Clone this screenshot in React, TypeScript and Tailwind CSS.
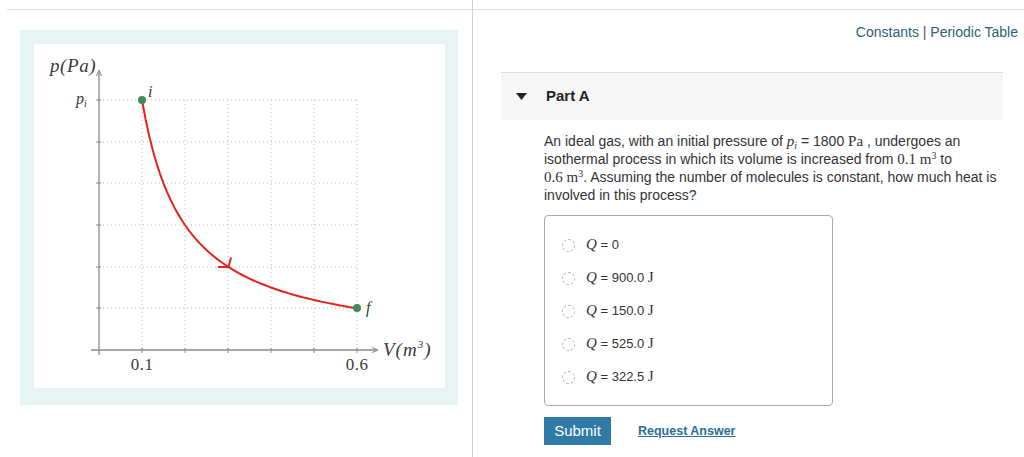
import React from 'react';

const serif = { fontFamily: '"Liberation Serif", "DejaVu Serif", serif' };

function Graph() {
  // isothermal curve p = pi * 0.1 / V, page coordinates
  const X = (v: number) => 142 + (v - 0.1) * 430;
  const Y = (r: number) => 350 - 250 * r;
  const pts: string[] = [];
  for (let i = 0; i <= 60; i++) {
    const v = 0.1 + (0.5 * i) / 60;
    pts.push(`${X(v).toFixed(2)},${Y(0.1 / v).toFixed(2)}`);
  }
  const cols = [142, 185, 228, 271, 314, 357];
  const rows = [100, 142, 183, 225, 267, 308];

  return (
    <svg width="411" height="344" viewBox="34 44 411 344" className="block">
      {/* grid */}
      {cols.map((x) => (
        <line key={'c' + x} x1={x} y1={100} x2={x} y2={350} stroke="#b8b8b8" strokeWidth="1" strokeDasharray="1 3" />
      ))}
      {rows.map((y) => (
        <line key={'r' + y} x1={99} y1={y} x2={357} y2={y} stroke="#b8b8b8" strokeWidth="1" strokeDasharray="1 3" />
      ))}
      {/* axes */}
      <line x1={99} y1={355} x2={99} y2={72} stroke="#8a8a8a" strokeWidth="1.3" />
      <path d="M96.5 76 L99 70 L101.5 76" fill="none" stroke="#8a8a8a" strokeWidth="1" />
      <line x1={91} y1={350} x2={376} y2={350} stroke="#8a8a8a" strokeWidth="1.3" />
      <path d="M372 347.5 L378 350 L372 352.5" fill="none" stroke="#8a8a8a" strokeWidth="1" />
      {rows.map((y) => (
        <line key={'ty' + y} x1={96} y1={y} x2={101} y2={y} stroke="#8a8a8a" strokeWidth="1" />
      ))}
      {cols.map((x) => (
        <line key={'tx' + x} x1={x} y1={348} x2={x} y2={353} stroke="#8a8a8a" strokeWidth="1" />
      ))}
      {/* curve */}
      <polyline points={pts.join(' ')} fill="none" stroke="#e3231b" strokeWidth="2" />
      <path d="M218 267 L228.5 267 L231 257.5" fill="none" stroke="#e3231b" strokeWidth="2" />
      <circle cx={142} cy={100} r={4} fill="#3e8c5d" />
      <circle cx={357} cy={308} r={4} fill="#3e8c5d" />
      {/* labels */}
      <g fill="#3a3a3a" style={serif}>
        <text x={50} y={72} fontSize="19" fontStyle="italic" letterSpacing="0.6">
          p(Pa)
        </text>
        <text x={76} y={104} fontSize="16" fontStyle="italic">
          p
          <tspan fontSize="10" dy="3">
            i
          </tspan>
        </text>
        <text x={148} y={97} fontSize="16" fontStyle="italic">
          i
        </text>
        <text x={366} y={313} fontSize="16" fontStyle="italic">
          f
        </text>
        <text x={142} y={370} fontSize="17" textAnchor="middle" letterSpacing="0.5">
          0.1
        </text>
        <text x={357} y={370} fontSize="17" textAnchor="middle" letterSpacing="0.5">
          0.6
        </text>
        <text x={383} y={356} fontSize="19" fontStyle="italic" letterSpacing="1">
          V(m
          <tspan fontSize="11" dy="-8">
            3
          </tspan>
          <tspan dy="8">)</tspan>
        </text>
      </g>
    </svg>
  );
}

function M({ children, italic }: { children: React.ReactNode; italic?: boolean }) {
  return (
    <span className={`text-[15px] leading-none ${italic ? 'italic' : ''}`} style={serif}>
      {children}
    </span>
  );
}

const options = ['0', '900.0', '150.0', '525.0', '322.5'];

export default function App() {
  return (
    <div
      className="flex h-[457px] w-[1024px] bg-white text-[#333]"
      style={{ fontFamily: '"Liberation Sans", Arial, sans-serif' }}
    >
      {/* Left column - figure */}
      <div className="w-[473px] shrink-0 border-r border-[#cfcfcf]">
        <div className="ml-[7px] mt-[9px] border-t border-[#dedede]" />
        <div className="ml-[20px] mt-[20px] w-[438px] bg-[#e6f4f4] pb-[17px] pl-[14px] pr-[13px] pt-[14px]">
          <div className="bg-white">
            <Graph />
          </div>
        </div>
      </div>

      {/* Right column - question */}
      <div className="flex-1">
        <div className="mt-[9px] border-t border-[#dedede]" />
        <div className="mt-[14px] pr-[6px] text-right text-[14px] leading-4 text-[#2c5f78]">
          Constants <span className="text-[#555]">|</span> Periodic Table
        </div>

        <div className="ml-[28px] mr-[21px] mt-[32px]">
          <div className="flex h-[48px] items-center border-t border-[#dcdcdc] bg-[#f6f6f6]">
            <svg width="11" height="7" viewBox="0 0 11 7" className="ml-[15px]">
              <path d="M0 0 L11 0 L5.5 7 Z" fill="#222" />
            </svg>
            <span className="ml-[19px] text-[15px] font-bold text-[#222]">Part A</span>
          </div>

          <div className="ml-[43px]">
            <p className="mt-[12px] text-[14px] leading-[18px] text-[#333]">
              An ideal gas, with an initial pressure of{' '}
              <M italic>
                p<sub className="text-[10px]">i</sub>
              </M>{' '}
              = 1800 <M>Pa</M> , undergoes an
              <br />
              isothermal process in which its volume is increased from <M>0.1 m</M>
              <sup className="text-[10px]" style={serif}>
                3
              </sup>{' '}
              to
              <br />
              <M>0.6 m</M>
              <sup className="text-[10px]" style={serif}>
                3
              </sup>
              . Assuming the number of molecules is constant, how much heat is
              <br />
              involved in this process?
            </p>

            <div className="mt-[11px] h-[191px] w-[289px] rounded-[4px] border border-[#a9a9a9] pl-[17px] pt-[22px]">
              <div className="flex flex-col gap-[19px]">
                {options.map((o) => (
                  <div key={o} className="flex h-[14px] items-center">
                    <span className="h-[13px] w-[13px] rounded-full border border-dashed border-[#b5b5b5]" />
                    <span className="ml-[11px] text-[13px] text-[#333]">
                      <M italic>Q</M> = {o}
                      {o !== '0' && (
                        <>
                          {' '}
                          <M>J</M>
                        </>
                      )}
                    </span>
                  </div>
                ))}
              </div>
            </div>

            <div className="mt-[11px] flex items-center">
              <button className="h-[28px] w-[67px] bg-[#2f7ba6] text-[15px] text-white">Submit</button>
              <a className="ml-[27px] text-[12.5px] font-bold text-[#2b6d96] underline">Request Answer</a>
            </div>
          </div>
        </div>
      </div>
    </div>
  );
}
